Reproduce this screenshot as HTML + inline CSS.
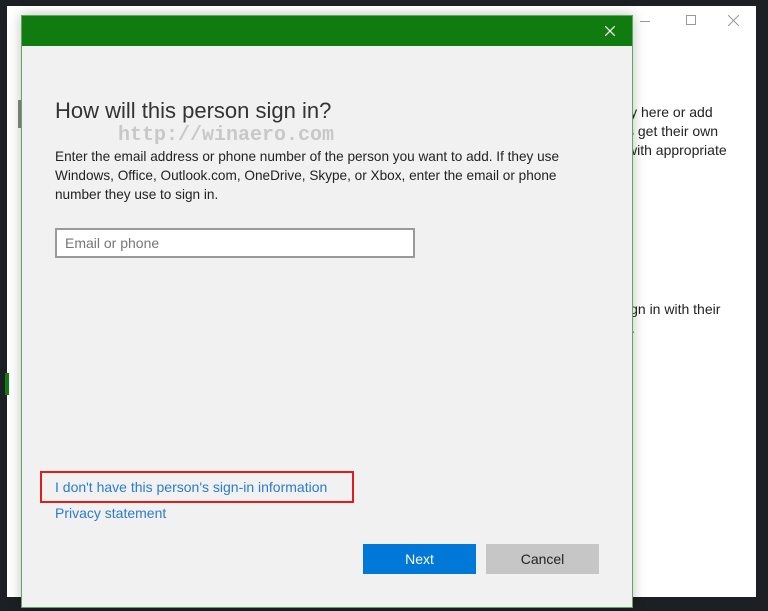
<!DOCTYPE html>
<html><head><style>
*{margin:0;padding:0;box-sizing:border-box}
body{width:768px;height:611px;overflow:hidden;position:relative;background:#1c1f24;font-family:"Liberation Sans",sans-serif}
.back{position:absolute;left:7px;top:6px;width:749px;height:591px;background:#fff}
.bt{position:absolute;font-size:14px;color:#222;line-height:19px;white-space:nowrap}
.dlg{position:absolute;left:21px;top:15px;width:612px;height:593px;background:#f1f1f1;border:1px solid #5fa85f;box-shadow:0 0 12px rgba(0,0,0,.25)}
.hdr{position:absolute;left:0;top:0;width:100%;height:30px;background:#107c10}
.t{position:absolute;white-space:nowrap}
a{color:#2b7bd0;text-decoration:none}
</style></head><body>
<div class="back">
<div style="position:absolute;left:633px;top:15px;width:10px;height:1px;background:#999"></div>
<div style="position:absolute;left:679px;top:9px;width:10px;height:10px;border:1px solid #999"></div>
<svg style="position:absolute;left:721px;top:9px" width="11" height="11"><path d="M0 0L11 11M11 0L0 11" stroke="#999" stroke-width="1"/></svg>
<div style="position:absolute;left:11px;top:94px;width:3px;height:28px;background:#888"></div>
<div style="position:absolute;left:-2px;top:367px;width:4px;height:22px;background:#107c10"></div>
<div class="bt" style="left:620px;top:97px">ly here or add</div>
<div class="bt" style="left:620px;top:116px">s get their own</div>
<div class="bt" style="left:620px;top:135px">with appropriate</div>
<div class="bt" style="left:620px;top:294px">ign in with their</div>
<div class="bt" style="left:620px;top:313px">/.</div>
</div>
<div class="dlg">
<div class="hdr"><svg style="position:absolute;left:583px;top:10px" width="10" height="10"><path d="M0 0L10 10M10 0L0 10" stroke="#fff" stroke-width="1.2"/></svg></div>
<div class="t" style="left:33px;top:82px;font-size:22px;color:#333">How will this person sign in?</div>
<div class="t" style="left:96px;top:108px;font-size:20px;font-weight:bold;color:#c8c8c8;font-family:'Liberation Mono',monospace">http://winaero.com</div>
<div class="t" style="left:33px;top:131px;font-size:13.6px;line-height:19px;color:#222">Enter the email address or phone number of the person you want to add. If they use<br>Windows, Office, Outlook.com, OneDrive, Skype, or Xbox, enter the email or phone<br>number they use to sign in.</div>
<div style="position:absolute;left:33px;top:212px;width:360px;height:30px;background:#fff;border:2px solid #9a9a9a"></div>
<div class="t" style="left:43px;top:219px;font-size:14px;color:#777">Email or phone</div>
<div style="position:absolute;left:18px;top:455px;width:314px;height:32px;border:2px solid #e21b1b"></div>
<div class="t" style="left:33px;top:463px;font-size:14px"><a>I don't have this person's sign-in information</a></div>
<div class="t" style="left:33px;top:489px;font-size:14px"><a>Privacy statement</a></div>
<div style="position:absolute;left:341px;top:528px;width:113px;height:30px;background:#0078d7;color:#fff;font-size:14px;text-align:center;line-height:30px">Next</div>
<div style="position:absolute;left:464px;top:528px;width:113px;height:30px;background:#c6c6c6;color:#222;font-size:14px;text-align:center;line-height:30px">Cancel</div>
</div>
</body></html>
